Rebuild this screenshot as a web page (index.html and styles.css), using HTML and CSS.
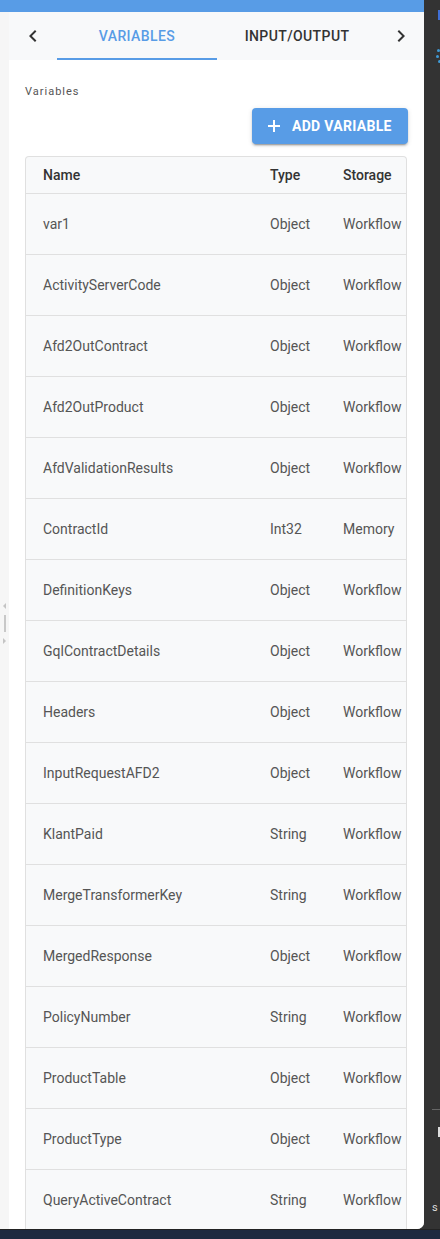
FILE: index.html
```html
<!DOCTYPE html>
<html lang="en">
<head>
    <meta charset="UTF-8">
    <meta name="viewport" content="width=device-width, initial-scale=1.0">
    <title>Variables</title>
    <link rel="stylesheet" href="styles.css">
</head>
<body>

    <div class="screen">
        <div class="window">
            <div class="topbar"></div>
            <div class="window-body">
                <!-- splitter strip on the left -->
                <div class="splitter">
                    <span class="grip-arrow up"></span>
                    <span class="grip"></span>
                    <span class="grip-arrow down"></span>
                </div>

                <div class="panel">
                    <!-- Tabs -->
                    <div class="tabs">
                        <button class="tab-arrow">
                            <svg width="24" height="24" viewBox="0 0 24 24"><path d="M15.41 7.41 14 6l-6 6 6 6 1.41-1.41L10.83 12z" fill="#333"/></svg>
                        </button>
                        <div class="tab active">VARIABLES</div>
                        <div class="tab">INPUT/OUTPUT</div>
                        <button class="tab-arrow">
                            <svg width="24" height="24" viewBox="0 0 24 24"><path d="M8.59 16.59 10 18l6-6-6-6-1.41 1.41L13.17 12z" fill="#333"/></svg>
                        </button>
                    </div>

                    <div class="content">
                        <p class="section-label">Variables</p>

                        <div class="actions">
                            <button class="add-btn">
                                <svg width="16" height="16" viewBox="0 0 16 16"><path d="M8 2v12M2 8h12" stroke="#fff" stroke-width="2"/></svg>
                                ADD VARIABLE
                            </button>
                        </div>

                        <div class="var-table">
                            <div class="var-row head">
                                <div>Name</div>
                                <div>Type</div>
                                <div>Storage</div>
                            </div>
                            <div id="rows"></div>
                        </div>
                    </div>
                </div>
            </div>
        </div>

        <!-- edge of the window behind -->
        <div class="backdrop">
            <span class="bd-square"></span>
            <span class="bd-dot d1"></span>
            <span class="bd-dot d2"></span>
            <span class="bd-dot d3"></span>
            <span class="bd-line"></span>
            <span class="bd-mark"></span>
            <span class="bd-letter">s</span>
        </div>
    </div>
    <div class="taskbar"></div>

    <script>
        // variables shown in the table
        let variables = [
            ['var1', 'Object', 'Workflow'],
            ['ActivityServerCode', 'Object', 'Workflow'],
            ['Afd2OutContract', 'Object', 'Workflow'],
            ['Afd2OutProduct', 'Object', 'Workflow'],
            ['AfdValidationResults', 'Object', 'Workflow'],
            ['ContractId', 'Int32', 'Memory'],
            ['DefinitionKeys', 'Object', 'Workflow'],
            ['GqlContractDetails', 'Object', 'Workflow'],
            ['Headers', 'Object', 'Workflow'],
            ['InputRequestAFD2', 'Object', 'Workflow'],
            ['KlantPaid', 'String', 'Workflow'],
            ['MergeTransformerKey', 'String', 'Workflow'],
            ['MergedResponse', 'Object', 'Workflow'],
            ['PolicyNumber', 'String', 'Workflow'],
            ['ProductTable', 'Object', 'Workflow'],
            ['ProductType', 'Object', 'Workflow'],
            ['QueryActiveContract', 'String', 'Workflow']
        ];

        let rowsContainer = document.getElementById('rows');
        variables.forEach(v => {
            let row = document.createElement('div');
            row.classList.add('var-row');
            row.innerHTML = `<div>${v[0]}</div><div>${v[1]}</div><div>${v[2]}</div>`;
            rowsContainer.appendChild(row);
        });
    </script>

</body>
</html>
```

FILE: styles.css
```css
* {
    box-sizing: border-box;
}

body {
    margin: 0;
    height: 1239px;
    overflow: hidden;
    background: #333333;
    font-family: Roboto, "Liberation Sans", sans-serif;
}

.screen {
    display: flex;
    height: 1229px;
}

.window {
    width: 424px;
    display: flex;
    flex-direction: column;
    background: #f6f6f6;
    border-bottom-right-radius: 7px;
    overflow: hidden;
}

.topbar {
    height: 12px;
    background: #589ce6;
    flex-shrink: 0;
}

.window-body {
    flex: 1;
    display: flex;
    min-height: 0;
}

.splitter {
    width: 9px;
    background: #f6f6f6;
    display: flex;
    flex-direction: column;
    align-items: center;
    padding-top: 591px;
    gap: 6px;
}

.grip {
    width: 2px;
    height: 17px;
    background: #c8c8c8;
}

.grip-arrow {
    width: 0;
    height: 0;
    border-top: 3px solid transparent;
    border-bottom: 3px solid transparent;
}

.grip-arrow.up {
    border-right: 3px solid #c4c4c4;
}

.grip-arrow.down {
    border-left: 3px solid #c4c4c4;
}

.panel {
    flex: 1;
    background: white;
    display: flex;
    flex-direction: column;
    min-height: 0;
}

/* tabs */
.tabs {
    display: flex;
    height: 48px;
    background: #f8f9fa;
    flex-shrink: 0;
}

.tab-arrow {
    width: 48px;
    border: none;
    background: none;
    padding: 0;
    display: flex;
    align-items: center;
    justify-content: center;
}

.tab-arrow:last-child {
    width: 47px;
}

.tab {
    width: 160px;
    display: flex;
    align-items: center;
    justify-content: center;
    font-size: 14px;
    font-weight: 500;
    letter-spacing: 0.4px;
    color: #333;
    border-bottom: 2px solid transparent;
    padding-top: 2px;
}

.tab.active {
    color: #589ce6;
    border-bottom-color: #589ce6;
}

/* content */
.content {
    padding: 0 17px 0 16px;
}

.section-label {
    margin: 25px 0 0 0;
    font-size: 11px;
    line-height: 14px;
    letter-spacing: 1px;
    color: #555;
}

.actions {
    display: flex;
    justify-content: flex-end;
    margin-top: 9px;
    margin-right: -1px;
}

.add-btn {
    display: flex;
    align-items: center;
    gap: 10px;
    height: 36px;
    width: 156px;
    padding: 0 0 0 14px;
    border: none;
    border-radius: 4px;
    background: #589ce6;
    color: white;
    font-family: inherit;
    font-size: 14px;
    font-weight: 700;
    letter-spacing: 0.3px;
    box-shadow: 0 3px 1px -2px rgba(0,0,0,.2), 0 2px 2px 0 rgba(0,0,0,.14), 0 1px 5px 0 rgba(0,0,0,.12);
}

.var-table {
    margin-top: 12px;
    border: 1px solid #e0e0e0;
    border-bottom: none;
    border-radius: 4px 4px 0 0;
    background: #f8f9fa;
}

.var-row {
    display: grid;
    grid-template-columns: 227px 73px 1fr;
    height: 61px;
    align-items: center;
    border-bottom: 1px solid #e0e0e0;
    font-size: 14px;
    color: #555;
    white-space: nowrap;
}

.var-row > div {
    padding-left: 17px;
}

.var-row.head {
    height: 37px;
    color: #333;
    font-weight: 500;
}

/* the window behind, on the right */
.backdrop {
    flex: 1;
    position: relative;
    background: #333333;
}

.bd-square {
    position: absolute;
    left: 14px;
    top: 10px;
    width: 4px;
    height: 10px;
    background: #3f6fd6;
}

.bd-dot {
    position: absolute;
    width: 3px;
    height: 3px;
    border-radius: 50%;
    background: #3e9ad6;
}

.d1 { left: 12px; top: 55px; }
.d2 { left: 14px; top: 60px; }
.d3 { left: 13px; top: 49px; }

.bd-line {
    position: absolute;
    left: 8px;
    top: 1109px;
    width: 8px;
    height: 1px;
    background: #666;
}

.bd-mark {
    position: absolute;
    left: 14px;
    top: 1127px;
    width: 2px;
    height: 10px;
    background: #ddd;
}

.bd-letter {
    position: absolute;
    left: 8px;
    top: 1201px;
    font-size: 11px;
    color: #ddd;
}

.taskbar {
    height: 10px;
    background: #1e2a40;
    border-top: 1px solid #222;
}
```
